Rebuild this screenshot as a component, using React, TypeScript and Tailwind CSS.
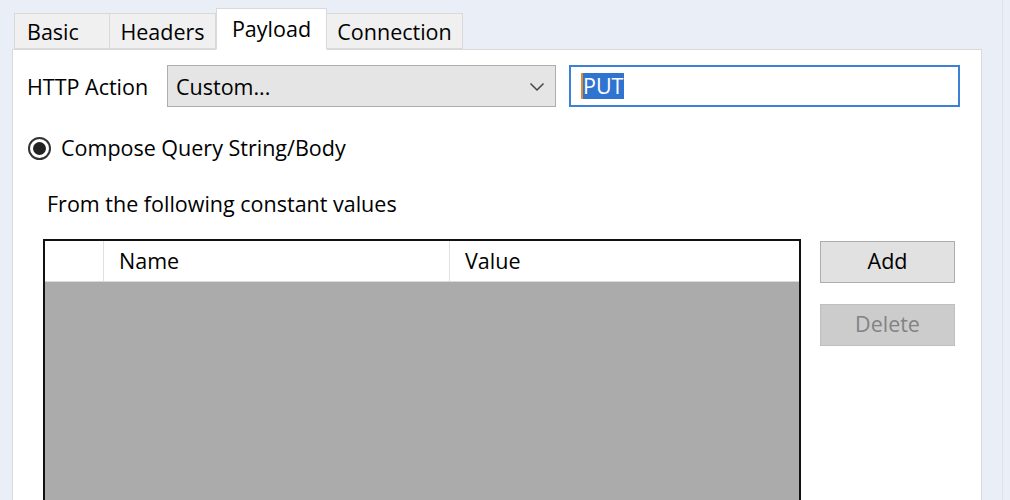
import React from 'react';

const font = { fontFamily: '"Segoe UI", "Open Sans", "Noto Sans", sans-serif' };

function Tab({ label, active, width, align }: { label: string; active?: boolean; width: string; align?: string }) {
  if (active) {
    return (
      <div
        className={`${width} h-[42px] -mb-px relative z-10 bg-white border border-[#d9d9d9] border-b-white flex items-start justify-center pt-[4px] text-[21.5px] text-black`}
      >
        {label}
      </div>
    );
  }
  return (
    <div
      className={`${width} ${align ?? 'justify-center'} h-[36px] bg-[#f0f0f0] border border-[#d9d9d9] -ml-px first:ml-0 flex items-center pt-[3px] text-[21.5px] text-black`}
    >
      {label}
    </div>
  );
}

export default function App() {
  return (
    <div className="w-[1010px] h-[500px] overflow-hidden bg-[#eaeef7] flex" style={font}>
      <div className="pl-[12px] pt-[8px] flex flex-col">
        <div className="flex items-end pl-[2px]">
          <Tab label="Basic" width="w-[96px]" align="justify-start pl-[12px]" />
          <Tab label="Headers" width="w-[107px]" />
          <Tab label="Payload" width="w-[111px]" active />
          <Tab label="Connection" width="w-[137px]" />
        </div>
        <div className="w-[970px] h-[460px] bg-white border border-[#d9d9d9] pl-[14px] pt-[15px]">
          <div className="flex items-center">
            <span className="text-[21.5px] text-black w-[140px] pt-[2px]">HTTP Action</span>
            <div className="w-[389px] h-[42px] bg-[#e5e5e5] border border-[#adadad] flex items-center justify-between pl-[8px] pr-[10px] pt-[2px] text-[21.5px] text-black">
              <span>Custom...</span>
              <svg width="16" height="10" viewBox="0 0 16 10" fill="none">
                <path d="M1.5 1.5 L8 8 L14.5 1.5" stroke="#444" strokeWidth="1.5" />
              </svg>
            </div>
            <div className="ml-[13px] w-[391px] h-[42px] border-2 border-[#3c80d8] flex items-center pl-[10px]">
              <span className="bg-[#2f74d0] text-white text-[21.5px] leading-[26px] pr-[1px] border-l-2 border-[#e88a2a]">PUT</span>
            </div>
          </div>

          <div className="flex items-center mt-[25px] pl-[1px]">
            <div className="w-[23px] h-[23px] rounded-full border-2 border-[#333] flex items-center justify-center">
              <div className="w-[13px] h-[13px] rounded-full bg-[#222]" />
            </div>
            <span className="ml-[10px] text-[21.5px] text-black">Compose Query String/Body</span>
          </div>

          <div className="mt-[24px] pl-[20px] text-[21.5px] text-black">From the following constant values</div>

          <div className="flex mt-[18px] pl-[16px]">
            <div className="w-[758px] h-[300px] border-2 border-[#111] bg-[#ababab]">
              <div className="flex h-[41px] bg-white border-b border-[#d9d9d9] text-[21.5px] text-black">
                <div className="w-[59px] border-r border-[#e0e0e0]" />
                <div className="w-[346px] border-r border-[#e0e0e0] pl-[15px] pt-[2px] flex items-center">Name</div>
                <div className="flex-1 pl-[15px] pt-[2px] flex items-center">Value</div>
              </div>
            </div>
            <div className="ml-[19px] flex flex-col pt-[2px]">
              <button className="w-[135px] h-[42px] bg-[#e1e1e1] border border-[#adadad] text-[21.5px] text-black">Add</button>
              <button className="w-[135px] h-[42px] mt-[21px] bg-[#cccccc] border border-[#bfbfbf] text-[21.5px] text-[#838383]">Delete</button>
            </div>
          </div>
        </div>
      </div>
      <div className="ml-[20px] w-px h-full bg-[#dde2ea]" />
    </div>
  );
}
